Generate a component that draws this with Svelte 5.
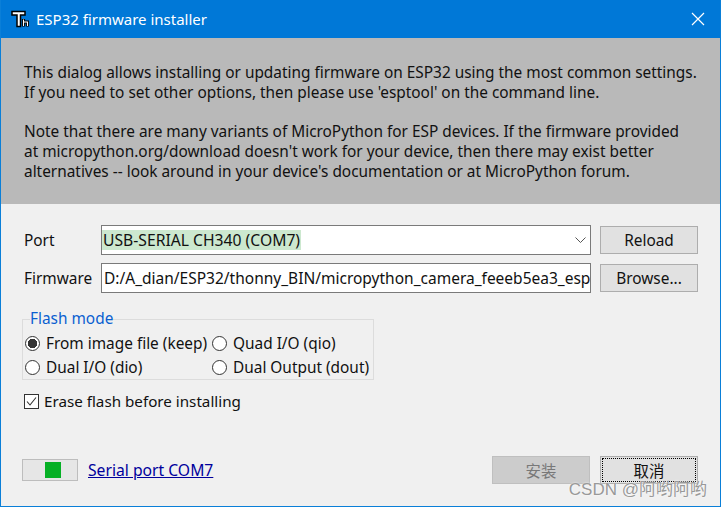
<script>
  let port = 'USB-SERIAL CH340 (COM7)';
  let firmware = 'D:/A_dian/ESP32/thonny_BIN/micropython_camera_feeeb5ea3_esp';
</script>

<div class="window">
  <div class="titlebar">
    <svg class="logo" width="18" height="18" viewBox="0 0 18 18">
      <path d="M1 1.500H14V5H9.500V16.500H6V5H1Z" fill="#fff" stroke="#000" stroke-width="1.500"/>
      <path d="M12.500 9V16.500M12.500 12H16.500V16.500" fill="none" stroke="#000" stroke-width="3.200"/>
      <path d="M12.500 9.500V16M12.500 12H16.500V16" fill="none" stroke="#fff" stroke-width="1.100"/>
    </svg>
    <span class="title">ESP32 firmware installer</span>
    <svg class="close" width="14" height="14" viewBox="0 0 14 14">
      <path d="M1 1L13 13M13 1L1 13" stroke="#fff" stroke-width="1.200" fill="none"/>
    </svg>
  </div>

  <div class="intro">
    <p>This dialog allows installing or updating firmware on ESP32 using the most common settings.<br>If you need to set other options, then please use 'esptool' on the command line.</p>
    <p>Note that there are many variants of MicroPython for ESP devices. If the firmware provided<br>at micropython.org/download doesn't work for your device, then there may exist better<br>alternatives -- look around in your device's documentation or at MicroPython forum.</p>
  </div>

  <div class="body">
    <div class="form">
      <span class="label">Port</span>
      <div class="field select">
        <span class="selected">{port}</span>
        <svg width="11" height="6" viewBox="0 0 11 6"><path d="M0.500 0.500L5.500 5.500L10.500 0.500" fill="none" stroke="#555" stroke-width="1"/></svg>
      </div>
      <button class="btn">Reload</button>

      <span class="label">Firmware</span>
      <div class="field text"><span>{firmware}</span></div>
      <button class="btn">Browse...</button>
    </div>

    <fieldset class="group">
      <legend>Flash mode</legend>
      <div class="radios">
        <span class="radio"><i class="dot on"></i>From image file (keep)</span>
        <span class="radio"><i class="dot"></i>Quad I/O (qio)</span>
        <span class="radio"><i class="dot"></i>Dual I/O (dio)</span>
        <span class="radio"><i class="dot"></i>Dual Output (dout)</span>
      </div>
    </fieldset>

    <div class="check">
      <span class="box">
        <svg width="13" height="13" viewBox="0 0 13 13"><path d="M2 6.500L5 10L11 2.500" fill="none" stroke="#333" stroke-width="1.100"/></svg>
      </span>
      <span class="check-label">Erase flash before installing</span>
    </div>

    <div class="footer">
      <span class="indicator"><i></i></span>
      <span class="link">Serial port COM7</span>
      <button class="btn disabled">安装</button>
      <button class="btn focus">取消</button>
    </div>
  </div>

  <span class="watermark">CSDN @阿哟阿哟</span>
</div>

<style>
  :global(body) {
    margin: 0;
    background: #f0f0f0;
  }
  .window {
    position: relative;
    width: 721px;
    height: 507px;
    box-sizing: border-box;
    display: flex;
    flex-direction: column;
    border: 1px solid #0a7fd8;
    border-top: 0;
    background: #f0f0f0;
    color: #111;
    font-family: "Noto Sans", "Noto Sans CJK SC", sans-serif;
    font-size: 15.4px;
    overflow: hidden;
  }
  .titlebar {
    height: 38px;
    flex: none;
    display: flex;
    align-items: center;
    padding: 0 15px 0 10px;
    background: #0078d7;
    color: #fff;
    font-size: 15px;
  }
  .logo {
    margin-right: 7px;
  }
  .title {
    flex: 1;
  }
  .intro {
    height: 166px;
    flex: none;
    box-sizing: border-box;
    padding: 25px 20px 0 23px;
    background: #b9b9b9;
    line-height: 20px;
    white-space: nowrap;
  }
  .intro p {
    margin: 0 0 19px;
  }
  .body {
    flex: 1;
    display: flex;
    flex-direction: column;
    padding: 21px 22px 22px 21px;
    min-height: 0;
  }
  .form {
    display: grid;
    grid-template-columns: 77px 490px 98px;
    row-gap: 8px;
    align-items: center;
    padding-left: 2px;
  }
  .form .btn {
    margin-left: 9px;
    width: 98px;
  }
  .field {
    box-sizing: border-box;
    height: 30px;
    display: flex;
    align-items: center;
    border: 1px solid #7a7a7a;
    background: #fff;
    overflow: hidden;
    white-space: nowrap;
  }
  .select {
    justify-content: space-between;
    padding-right: 4px;
  }
  .selected {
    background: #cce8cf;
    height: 20px;
    line-height: 20px;
    padding: 0 1px;
    font-size: 15.7px;
  }
  .text {
    padding-left: 2px;
    font-size: 15.5px;
  }
  .btn {
    box-sizing: border-box;
    height: 28px;
    padding: 0;
    border: 1px solid #adadad;
    background: #e1e1e1;
    color: #111;
    font: inherit;
  }
  .group {
    width: 352px;
    height: 67px;
    box-sizing: border-box;
    margin: 20px 0 0 0;
    padding: 0;
    border: 1px solid #dcdcdc;
    min-width: 0;
  }
  legend {
    margin-left: 7px;
    padding: 0;
    height: 12px;
    line-height: 12px;
    color: #0a5fd0;
  }
  .radios {
    display: grid;
    grid-template-columns: 187px auto;
    grid-auto-rows: 24px;
    padding: 6px 0 0 2px;
  }
  .radio {
    display: flex;
    align-items: center;
    gap: 6px;
    white-space: nowrap;
  }
  .dot {
    width: 15px;
    height: 15px;
    box-sizing: border-box;
    border: 1px solid #333;
    border-radius: 50%;
    background: #fff;
    flex: none;
  }
  .dot.on {
    background: radial-gradient(circle, #333 0 4.500px, #fff 5px);
  }
  .check {
    display: flex;
    align-items: center;
    gap: 5px;
    margin: 11px 0 0 2px;
    height: 20px;
  }
  .check-label {
    font-size: 15.2px;
  }
  .box {
    width: 15px;
    height: 15px;
    box-sizing: border-box;
    border: 1px solid #333;
    background: #fff;
    display: flex;
    align-items: center;
    justify-content: center;
  }
  .footer {
    margin-top: auto;
    display: flex;
    align-items: center;
  }
  .indicator {
    box-sizing: border-box;
    width: 56px;
    height: 22px;
    padding-left: 22px;
    border: 1px solid #bdbdbd;
    background: #e6e6e6;
    display: flex;
    align-items: center;
  }
  .indicator i {
    width: 16px;
    height: 16px;
    background: #06b025;
  }
  .link {
    margin-left: 10px;
    margin-right: auto;
    color: #00009c;
    font-size: 15.7px;
    text-decoration: underline;
  }
  .footer .btn {
    width: 98px;
    margin-left: 10px;
  }
  .disabled {
    background: #cccccc;
    border-color: #bfbfbf;
    color: #787878;
  }
  .focus {
    outline: 1px dotted #000;
    outline-offset: -3px;
  }
  .watermark {
    position: absolute;
    right: 13px;
    bottom: 6px;
    color: #999;
    font-size: 17px;
    font-family: "Liberation Sans", "Noto Sans CJK SC", sans-serif;
    text-shadow: 0 0 2px #fff;
  }
</style>
